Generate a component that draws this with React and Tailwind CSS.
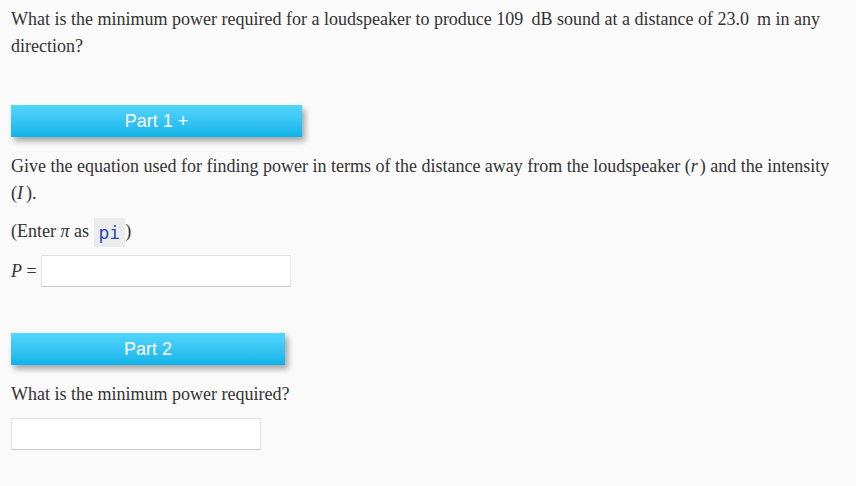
import React from 'react';

function PartBar({ label, width }) {
  return (
    <div
      className={`${width} h-8 flex items-center justify-center bg-gradient-to-b from-[#52d6fc] to-[#08b3e9] text-white text-[18px] shadow-[3px_4px_6px_rgba(0,0,0,0.35)]`}
      style={{ fontFamily: '"Liberation Sans", Arial, sans-serif' }}
    >
      {label}
    </div>
  );
}

function AnswerBox({ className = '' }) {
  return (
    <input
      type="text"
      className={`w-[250px] h-8 bg-white border border-[#e2e2e2] border-b-[#c8c8c8] outline-none ${className}`}
    />
  );
}

export default function App() {
  return (
    <div className="w-[856px] min-h-[486px] bg-[#fafafa]">
      <div
        className="px-[11px] pt-[6px] text-[18px] leading-[27px] text-[#333]"
        style={{ fontFamily: '"Liberation Serif", "Times New Roman", serif' }}
      >
        <p>
          What is the minimum power required for a loudspeaker to produce 109&thinsp; dB sound at a distance of 23.0&thinsp; m in any direction?
        </p>

        {/* Part 1 */}
        <div className="mt-[45px]">
          <PartBar label="Part 1 +" width="w-[291px]" />
        </div>
        <p className="mt-[16px]">
          Give the equation used for finding power in terms of the distance away from the loudspeaker (<i className="pr-[2px]">r</i>) and the intensity (<i className="pr-[3px]">I</i>).
        </p>
        <p className="mt-[11px]">
          (Enter <i>π</i> as{' '}
          <code
            className="inline-block bg-[#ececec] text-[#2a4bb0] px-[5px] text-[18px] leading-[29px] align-middle"
            style={{ fontFamily: '"DejaVu Sans Mono", "Liberation Mono", monospace' }}
          >
            pi
          </code>
          )
        </p>
        <div className="mt-[8px] flex items-center gap-[4px]">
          <span>
            <i>P</i> =
          </span>
          <AnswerBox />
        </div>

        {/* Part 2 */}
        <div className="mt-[46px]">
          <PartBar label="Part 2" width="w-[274px]" />
        </div>
        <p className="mt-[16px]">What is the minimum power required?</p>
        <div className="mt-[10px]">
          <AnswerBox />
        </div>
      </div>
    </div>
  );
}
